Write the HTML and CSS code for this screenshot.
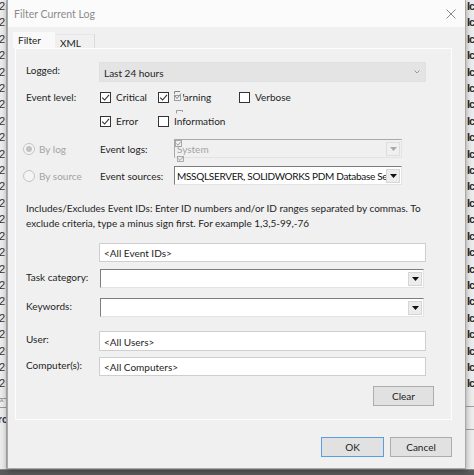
FILE: index.html
```html
<!DOCTYPE html>
<html>
<head>
<meta charset="utf-8">
<link rel="stylesheet" href="styles.css">
</head>
<body>
<div class="screen">
  <div class="bg-left">
    <div class="bg-lines">
      <div>2</div><div>2</div><div>2</div><div>2</div><div>2</div><div>2</div><div>2</div><div>2</div>
      <div>2</div><div>2</div><div>2</div><div>2</div><div>2</div><div>2</div><div>2</div><div>2</div>
      <div>2</div><div>2</div><div>2</div><div>2</div><div>2</div><div>2</div><div>2</div><div>2</div>
    </div>
    <div class="bg-sel"><span>^</span></div>
    <div class="bg-rc">rc</div>
  </div>

  <div class="dialog">
    <div class="titlebar">
      <span class="title">Filter Current Log</span>
      <svg class="close" width="10" height="10" viewBox="0 0 10 10"><path d="M0.5 0.5 L9.5 9.5 M9.5 0.5 L0.5 9.5" stroke="#8a8a8a" stroke-width="1" fill="none"/></svg>
    </div>
    <div class="dbody">
      <div class="tabs">
        <div class="tab active">Filter</div>
        <div class="tab">XML</div>
      </div>
      <div class="panel">
        <div class="row r-logged">
          <div class="lbl">Logged:</div>
          <div class="combo-flat">
            <span>Last 24 hours</span>
            <svg width="6" height="4" viewBox="0 0 6 4"><path d="M0.5 0.5 L3 3 L5.5 0.5" stroke="#9a9a9a" fill="none"/></svg>
          </div>
        </div>

        <div class="row r-lvl1">
          <div class="lbl">Event level:</div>
          <div class="checks">
            <div class="chk c1"><span class="box on"><svg width="9" height="9" viewBox="0 0 9 9"><path d="M1.2 4.6 L3.6 7 L8 1.8" stroke="#333" stroke-width="1.1" fill="none"/></svg></span><span>Critical</span></div>
            <div class="chk c2"><span class="box on"><svg width="9" height="9" viewBox="0 0 9 9"><path d="M1.2 4.6 L3.6 7 L8 1.8" stroke="#333" stroke-width="1.1" fill="none"/></svg></span><span class="wtxt">Warning<span class="glitch g-w"><svg width="8" height="10" viewBox="0 0 8 10"><path d="M0.5 0.5 H6 M0.5 0.5 V3 M1 5 L3 7.5 L7 2.5" stroke="#777" stroke-width="0.9" fill="none"/><rect x="0.5" y="4.5" width="6" height="5" stroke="#888" stroke-width="0.8" fill="none"/></svg></span></span></div>
            <div class="chk"><span class="box"></span><span>Verbose</span></div>
          </div>
        </div>

        <div class="row r-lvl2">
          <div class="lbl"></div>
          <div class="checks">
            <div class="chk c1"><span class="box on"><svg width="9" height="9" viewBox="0 0 9 9"><path d="M1.2 4.6 L3.6 7 L8 1.8" stroke="#333" stroke-width="1.1" fill="none"/></svg></span><span>Error</span></div>
            <div class="chk c2"><span class="box"></span><span class="itxt">Information<span class="glitch g-i"><svg width="7" height="4" viewBox="0 0 7 4"><path d="M0.5 3.5 V0.5 H6.5 V2" stroke="#888" stroke-width="0.8" fill="none"/></svg></span></span></div>
          </div>
        </div>

        <div class="row r-logs">
          <div class="radio-grp dis"><span class="radio on"></span><span>By log</span></div>
          <div class="lbl2">Event logs:</div>
          <div class="combo3 disabled">
            <span class="ctext">System</span>
            <span class="dd dd-dis"><svg width="7" height="4" viewBox="0 0 7 4"><path d="M0 0 H7 L3.5 4 Z" fill="#a8a8a8"/></svg></span>
            <span class="glitch g-s1"><svg width="7" height="7" viewBox="0 0 7 7"><rect x="0.5" y="0.5" width="6" height="6" stroke="#999" stroke-width="0.8" fill="none"/><path d="M1.3 3.5 L3 5.2 L6 1.5" stroke="#888" stroke-width="0.8" fill="none"/></svg></span>
            <span class="glitch g-s2"><svg width="7" height="6" viewBox="0 0 7 6"><rect x="0.5" y="0.5" width="6" height="5" stroke="#999" stroke-width="0.8" fill="none"/><path d="M1.3 2.8 L3 4.4 L6 1.2" stroke="#888" stroke-width="0.8" fill="none"/></svg></span>
          </div>
        </div>

        <div class="row r-src">
          <div class="radio-grp dis"><span class="radio"></span><span>By source</span></div>
          <div class="lbl2">Event sources:</div>
          <div class="combo3">
            <span class="ctext tight">MSSQLSERVER, SOLIDWORKS PDM Database Service</span>
            <span class="dd"><svg width="7" height="4" viewBox="0 0 7 4"><path d="M0 0 H7 L3.5 4 Z" fill="#111"/></svg></span>
          </div>
        </div>

        <div class="desc">Includes/Excludes Event IDs: Enter ID numbers and/or ID ranges separated by commas. To exclude criteria, type a minus sign first. For example 1,3,5-99,-76</div>

        <div class="row r-ids">
          <div class="lbl"></div>
          <div class="tbox">&lt;All Event IDs&gt;</div>
        </div>

        <div class="row r-task">
          <div class="lbl">Task category:</div>
          <div class="combo3 wide">
            <span class="ctext"></span>
            <span class="dd"><svg width="7" height="4" viewBox="0 0 7 4"><path d="M0 0 H7 L3.5 4 Z" fill="#111"/></svg></span>
          </div>
        </div>

        <div class="row r-kw">
          <div class="lbl">Keywords:</div>
          <div class="combo3 wide">
            <span class="ctext"></span>
            <span class="dd"><svg width="7" height="4" viewBox="0 0 7 4"><path d="M0 0 H7 L3.5 4 Z" fill="#111"/></svg></span>
          </div>
        </div>

        <div class="row r-user">
          <div class="lbl">User:</div>
          <div class="tbox t20">&lt;All Users&gt;</div>
        </div>

        <div class="row r-comp">
          <div class="lbl">Computer(s):</div>
          <div class="tbox">&lt;All Computers&gt;</div>
        </div>

        <div class="r-clear">
          <div class="btn clear">Clear</div>
        </div>
      </div>
      <div class="footer">
        <div class="btn ok">OK</div>
        <div class="btn cancel">Cancel</div>
      </div>
    </div>
  </div>

  <div class="bg-right">
    <div class="bg-lines r">
      <div>lc</div><div>lc</div><div>lc</div><div>lc</div><div>lc</div><div>lc</div><div>lc</div><div>lc</div>
      <div>lc</div><div>lc</div><div>lc</div><div>lc</div><div>lc</div><div>lc</div><div>lc</div><div>lc</div>
      <div>lc</div><div>lc</div><div>lc</div><div>lc</div><div>lc</div><div>lc</div><div>lc</div><div>lc</div>
    </div>
    <div class="bg-sel-r"></div>
  </div>

  <div class="taskbar"></div>
</div>
</body>
</html>
```

FILE: styles.css
```css
html, body {
  margin: 0;
  padding: 0;
  overflow: hidden;
  background: #e9e9e9;
}

.screen {
  width: 474px;
  height: 475px;
  display: grid;
  grid-template-columns: 7px 459px 8px;
  grid-template-rows: 469px 6px;
  font-family: Lato, "Noto Sans", sans-serif;
  font-size: 10px;
  color: #1e1e1e;
}

/* ---------- background window ---------- */
.bg-left, .bg-right {
  background: #ececec;
  overflow: hidden;
  font-family: "Liberation Sans", sans-serif;
  font-size: 11px;
  color: #333;
  display: flex;
  flex-direction: column;
}
.bg-left { border-right: 1px solid #b9b9b9; box-sizing: border-box; }
.bg-lines {
  padding-top: 0;
  line-height: 16.4px;
  margin-top: -2px;
}
.bg-lines div { white-space: nowrap; }
.bg-left .bg-lines { margin-left: -1px; }
.bg-lines.r { margin-left: 1px; font-weight: bold; color: #2a2a2a; letter-spacing: -1px; }

.bg-sel {
  margin-top: 6px;
  height: 8px;
  border-top: 1px solid #9a9a9a;
  border-bottom: 1px solid #9a9a9a;
  font-size: 7px;
  line-height: 6px;
  color: #555;
}
.bg-rc {
  margin-top: 6px;
  font-size: 10px;
  color: #334;
  font-weight: bold;
  margin-left: -2px;
  line-height: 12px;
  white-space: nowrap;
}
.bg-sel-r {
  margin-top: 14px;
  height: 22px;
  border-top: 1px solid #a0a0a0;
  border-bottom: 1px solid #a0a0a0;
}

.taskbar {
  grid-column: 1 / 4;
  background: #5b5b5b;
  border-top: 1px solid #8a8a8a;
}

/* ---------- dialog ---------- */
.dialog {
  background: #f0f0f0;
  border: 1px solid #a9a9a9;
  border-top: none;
  box-sizing: border-box;
  display: flex;
  flex-direction: column;
  box-shadow: 0 2px 6px rgba(0,0,0,0.35);
  position: relative;
  z-index: 1;
}

.titlebar {
  height: 27px;
  background: #fbfbfb;
  display: flex;
  align-items: center;
  justify-content: space-between;
  padding: 0 9px 0 6px;
  flex: none;
}
.title {
  font-size: 10.5px;
  color: #8c8c8c;
  margin-top: 1px;
}
.close { margin-top: 1px; }

.dbody {
  padding: 5px 0 0 5px;
}

.tabs {
  display: flex;
  align-items: flex-end;
  height: 16px;
}
.tab {
  height: 14px;
  line-height: 14px;
  padding: 0;
  box-sizing: border-box;
  color: #1e1e1e;
  font-size: 10px;
}
.tab.active {
  width: 42px;
  height: 16px;
  line-height: 17px;
  background: #f9f9f9;
  padding-left: 5px;
}
.tab:not(.active) {
  width: 40px;
  padding-left: 5px;
  line-height: 16px;
  border-right: 1px solid #dadada;
  border-top: 1px solid #e6e6e6;
  background: #f0f0f0;
}

.panel {
  margin-left: 2px;
  width: 437px;
  height: 372px;
  box-sizing: border-box;
  border: 1px solid #fdfdfd;
  background: #f0f0f0;
  padding: 0 0 0 10px;
  display: flex;
  flex-direction: column;
}

.row {
  display: flex;
  align-items: center;
  flex: none;
}
.lbl {
  width: 73px;
  flex: none;
}

.r-logged { margin-top: 13px; height: 20px; }
.r-logged .lbl { margin-top: -5px; }
.combo-flat {
  width: 327px;
  height: 20px;
  box-sizing: border-box;
  background: #e4e4e4;
  border: 1px solid #e0e0e0;
  display: flex;
  align-items: center;
  justify-content: space-between;
  padding: 0 5px 0 4px;
}
.combo-flat span { margin-top: 1px; }

.r-lvl1 { margin-top: 8px; height: 14px; }
.r-lvl2 { margin-top: 10px; height: 14px; }

.checks { display: flex; margin-left: 1px; }
.chk {
  display: flex;
  align-items: center;
  gap: 5px;
}
.chk.c1 { width: 58px; }
.chk.c2 { width: 81px; }
.box {
  width: 11px;
  height: 11px;
  box-sizing: border-box;
  border: 1px solid #333;
  background: #fff;
  display: flex;
  align-items: center;
  justify-content: center;
  flex: none;
}
.box.on { background: #fff; }

.wtxt, .itxt { position: relative; }
.glitch {
  position: absolute;
  line-height: 0;
}
.g-w { left: 0; top: -1px; background: #f0f0f0; width: 9px; height: 12px; display: flex; align-items: center; }
.g-i { left: 2px; top: -5px; }

.r-logs { margin-top: 11px; height: 19px; }
.r-src { margin-top: 8px; height: 19px; }

.radio-grp {
  width: 77px;
  margin-left: -3px;
  display: flex;
  align-items: center;
  gap: 4px;
  flex: none;
}
.radio-grp.dis { color: #a3a3a3; }
.radio {
  width: 12px;
  height: 12px;
  border-radius: 50%;
  box-sizing: border-box;
  border: 1px solid #c4c4c4;
  background: #f4f4f4;
  display: flex;
  align-items: center;
  justify-content: center;
}
.radio.on::after {
  content: "";
  width: 6px;
  height: 6px;
  border-radius: 50%;
  background: #c2c2c2;
}
.lbl2 { width: 74px; flex: none; }

.combo3 {
  width: 228px;
  height: 19px;
  box-sizing: border-box;
  background: #fff;
  border-top: 1px solid #7d7d7d;
  border-left: 1px solid #7d7d7d;
  border-right: 1px solid #e3e3e3;
  border-bottom: 1px solid #e3e3e3;
  display: flex;
  align-items: center;
  padding: 0 1px 0 2px;
  position: relative;
  overflow: hidden;
}
.combo3.disabled {
  background: #f0f0f0;
  border-top-color: #a9a9a9;
  border-left-color: #a9a9a9;
}
.combo3.wide { width: 324px; margin-left: 1px; height: 19px; }
.ctext {
  flex: 1;
  min-width: 0;
  white-space: nowrap;
  overflow: hidden;
  text-overflow: clip;
  color: #111;
  margin-top: 1px;
}
.ctext.tight { letter-spacing: -0.3px; }
.combo3.disabled .ctext { color: #a4a4a4; }
.dd {
  width: 14px;
  height: 14px;
  box-sizing: border-box;
  background: #ececec;
  border: 1px solid #d6d6d6;
  display: flex;
  align-items: center;
  justify-content: center;
  flex: none;
}
.dd-dis { background: #f0f0f0; border-color: #dedede; }
.g-s1 { left: 0; top: 0; }
.g-s2 { left: 2px; top: 16px; }
.r-logs .combo3 { overflow: visible; }

.desc {
  margin-top: 16px;
  width: 410px;
  line-height: 15px;
  flex: none;
}

.tbox {
  width: 327px;
  height: 19px;
  box-sizing: border-box;
  background: #fff;
  border: 1px solid #cfcfcf;
  display: flex;
  align-items: center;
  padding-left: 4px;
  padding-top: 1px;
}
.tbox.t20 { height: 20px; }

.r-ids { margin-top: 12px; }
.r-task { margin-top: 7px; }
.r-kw { margin-top: 10px; }
.r-user { margin-top: 14px; }
.r-comp { margin-top: 6px; }
.r-task .lbl, .r-kw .lbl, .r-user .lbl, .r-comp .lbl { margin-top: -4px; }

.r-clear {
  margin-top: 10px;
  display: flex;
  justify-content: flex-end;
  padding-right: 17px;
}

.btn {
  height: 20px;
  box-sizing: border-box;
  background: #e1e1e1;
  border: 1px solid #adadad;
  display: flex;
  align-items: center;
  justify-content: center;
  color: #222;
}
.btn.clear { width: 61px; }

.footer {
  display: flex;
  justify-content: flex-end;
  gap: 6px;
  margin-top: 17px;
  padding-right: 13px;
}
.btn.ok { width: 63px; border-color: #5aa0e0; }
.btn.cancel { width: 62px; }
```
